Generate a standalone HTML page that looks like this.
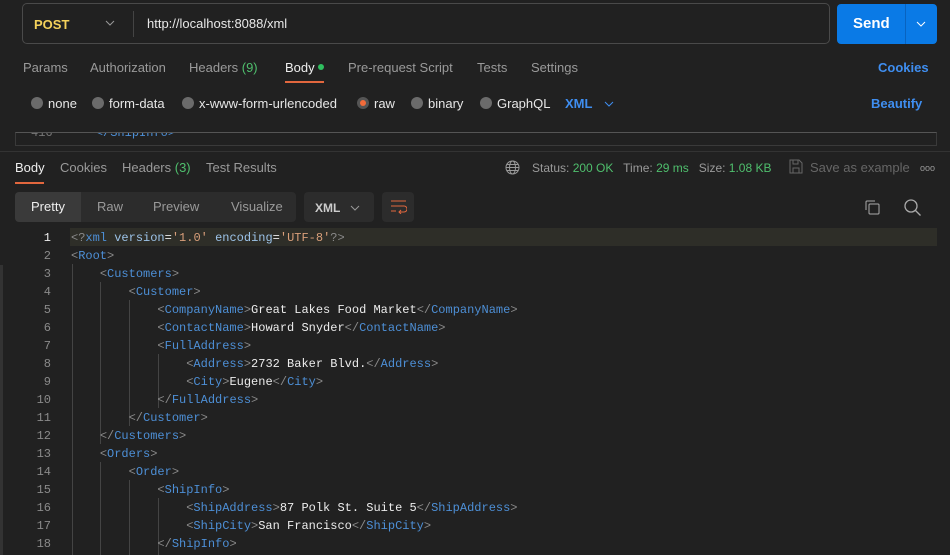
<!DOCTYPE html>
<html><head><meta charset="utf-8"><style>
*{box-sizing:border-box;margin:0;padding:0}
body{width:950px;height:555px;background:#212121;font-family:"Liberation Sans",sans-serif;color:#b0b0b0;font-size:13px;position:relative;overflow:hidden}
.a{position:absolute;white-space:nowrap}
.url{left:22px;top:3px;width:808px;height:41px;border:1px solid #4a4a4a;border-radius:5px}
.send{left:837px;top:4px;width:100px;height:40px;background:#0a7ae6;border-radius:4px}
.tab{top:60px;font-size:13px;color:#9a9a9a}
.g{color:#4fbf6d}
.rad{top:97px;width:12px;height:12px;border-radius:50%;background:#6b6b6b}
.rl{top:96px;color:#e6e6e6;font-size:13px}
.blue{color:#3f8ef0;font-weight:bold}
.code{font-family:"Liberation Mono",monospace;font-size:12px}
.ln{left:0;width:51px;text-align:right;color:#8a8a8a}
.t{color:#4d8fd6}.p{color:#8a8a8a}.w{color:#ececec}.at{color:#9cc3e8}.s{color:#d99f7a}
.guide{position:absolute;width:1px;background:#444}
pre.a{white-space:pre}
</style></head><body>
<div class="a url"></div>
<div class="a" style="left:34px;top:17px;color:#f5d25b;font-weight:bold;font-size:13px">POST</div>
<svg class="a" style="left:105px;top:20px" width="10" height="6"><path d="M1 1l4 4 4-4" stroke="#999" fill="none"/></svg>
<div class="a" style="left:133px;top:11px;width:1px;height:26px;background:#444"></div>
<div class="a" style="left:147px;top:16px;color:#e8e8e8;font-size:13px">http://localhost:8088/xml</div>
<div class="a send"></div>
<div class="a" style="left:853px;top:15px;color:#fff;font-weight:bold;font-size:15px">Send</div>
<div class="a" style="left:905px;top:4px;width:1px;height:40px;background:#0863c0"></div>
<svg class="a" style="left:916px;top:21px" width="10" height="6"><path d="M1 1l4 4 4-4" stroke="#fff" fill="none"/></svg>

<div class="a tab" style="left:23px">Params</div>
<div class="a tab" style="left:90px">Authorization</div>
<div class="a tab" style="left:189px">Headers <span class="g">(9)</span></div>
<div class="a tab" style="left:285px;color:#eee">Body <span style="display:inline-block;width:6px;height:6px;border-radius:50%;background:#2fbf5f;vertical-align:2px"></span></div>
<div class="a" style="left:285px;top:81px;width:39px;height:2px;background:#e2673e"></div>
<div class="a tab" style="left:348px">Pre-request Script</div>
<div class="a tab" style="left:477px">Tests</div>
<div class="a tab" style="left:531px">Settings</div>
<div class="a tab blue" style="left:878px">Cookies</div>

<div class="a rad" style="left:31px"></div><div class="a rl" style="left:48px">none</div>
<div class="a rad" style="left:92px"></div><div class="a rl" style="left:109px">form-data</div>
<div class="a rad" style="left:182px"></div><div class="a rl" style="left:199px">x-www-form-urlencoded</div>
<div class="a rad" style="left:357px;background:#555"><div style="margin:3px;width:6px;height:6px;border-radius:50%;background:#f26b3a"></div></div><div class="a rl" style="left:374px">raw</div>
<div class="a rad" style="left:411px"></div><div class="a rl" style="left:428px">binary</div>
<div class="a rad" style="left:480px"></div><div class="a rl" style="left:497px">GraphQL</div>
<div class="a blue" style="left:565px;top:96px">XML</div>
<svg class="a" style="left:604px;top:101px" width="10" height="6"><path d="M1 1l4 4 4-4" stroke="#3f8ef0" fill="none"/></svg>
<div class="a blue" style="left:871px;top:96px">Beautify</div>

<div class="a" style="left:15px;top:132px;width:922px;height:14px;border:1px solid #3a3a3a;border-top:1px solid #555;overflow:hidden">
<div class="code" style="position:absolute;left:15px;top:-7px;color:#777">416&nbsp;&nbsp;&nbsp;&nbsp;&nbsp;&nbsp;<span class="t">&lt;/ShipInfo&gt;</span></div></div>
<div class="a" style="left:0;top:151px;width:950px;height:1px;background:#333"></div>

<div class="a" style="left:15px;top:160px;color:#eee">Body</div>
<div class="a" style="left:15px;top:182px;width:29px;height:2px;background:#e2673e"></div>
<div class="a" style="left:60px;top:160px;color:#9a9a9a">Cookies</div>
<div class="a" style="left:122px;top:160px;color:#9a9a9a">Headers <span class="g">(3)</span></div>
<div class="a" style="left:206px;top:160px;color:#9a9a9a">Test Results</div>
<svg class="a" style="left:505px;top:160px" width="15" height="15" fill="none" stroke="#999"><circle cx="7.5" cy="7.5" r="6.5"/><ellipse cx="7.5" cy="7.5" rx="3" ry="6.5"/><path d="M1 7.5h13M2 4.5h11M2 10.5h11"/></svg>
<div class="a" style="left:532px;top:161px;font-size:12px;color:#9a9a9a">Status: <span class="g">200 OK</span>&nbsp;&nbsp; Time: <span class="g">29 ms</span>&nbsp;&nbsp; Size: <span class="g">1.08 KB</span></div>
<svg class="a" style="left:789px;top:159px" width="14" height="15" fill="none" stroke="#666"><path d="M1 1h9l3 3v10H1z M4 1v4h5V1 M4 14V9h6v5"/></svg>
<div class="a" style="left:810px;top:160px;color:#666">Save as example</div>
<div class="a" style="left:920px;top:163px;color:#999;font-size:9px">ooo</div>

<div class="a" style="left:15px;top:192px;width:281px;height:30px;background:#2c2c2c;border-radius:4px"></div>
<div class="a" style="left:15px;top:192px;width:66px;height:30px;background:#3a3a3a;border-radius:4px 0 0 4px"></div>
<div class="a" style="left:31px;top:199px;color:#eee">Pretty</div>
<div class="a" style="left:97px;top:199px;color:#9a9a9a">Raw</div>
<div class="a" style="left:153px;top:199px;color:#9a9a9a">Preview</div>
<div class="a" style="left:231px;top:199px;color:#9a9a9a">Visualize</div>
<div class="a" style="left:304px;top:192px;width:70px;height:30px;background:#2c2c2c;border-radius:4px"></div>
<div class="a" style="left:315px;top:201px;color:#ccc;font-size:12px;font-weight:bold">XML</div>
<svg class="a" style="left:350px;top:205px" width="10" height="6"><path d="M1 1l4 4 4-4" stroke="#999" fill="none"/></svg>
<div class="a" style="left:382px;top:192px;width:32px;height:30px;background:#2c2c2c;border-radius:4px"></div>
<svg class="a" style="left:390px;top:199px" width="17" height="15" fill="none" stroke="#e2673e"><path d="M1 2h15M1 7h13a3 3 0 0 1 0 6H9M11 11l-2 2 2 2M1 12h5"/></svg>
<svg class="a" style="left:865px;top:200px" width="15" height="15" fill="none" stroke="#aaa"><rect x="4" y="4" width="10" height="10" rx="1"/><path d="M1 10V2a1 1 0 0 1 1-1h8"/></svg>
<svg class="a" style="left:904px;top:199px" width="17" height="17" fill="none" stroke="#aaa" stroke-width="1.3"><circle cx="7" cy="7" r="6"/><path d="M11.5 11.5l5 5"/></svg>

<div class="a" style="left:0;top:265px;width:3px;height:290px;background:#333"></div>
<div class="a" style="left:70px;top:228px;width:867px;height:18px;background:#2e2e28"></div>
<div class="guide" style="left:72px;top:264px;height:291px"></div>
<div class="guide" style="left:100px;top:282px;height:162px"></div>
<div class="guide" style="left:129px;top:300px;height:126px"></div>
<div class="guide" style="left:158px;top:354px;height:54px"></div>
<div class="guide" style="left:100px;top:462px;height:93px"></div>
<div class="guide" style="left:129px;top:480px;height:75px"></div>
<div class="guide" style="left:158px;top:498px;height:57px"></div>

<div class="a code" style="left:0;top:229px;line-height:18px">
<div class="ln" style="color:#eee">1</div><div class="ln">2</div><div class="ln">3</div><div class="ln">4</div><div class="ln">5</div><div class="ln">6</div><div class="ln">7</div><div class="ln">8</div><div class="ln">9</div><div class="ln">10</div><div class="ln">11</div><div class="ln">12</div><div class="ln">13</div><div class="ln">14</div><div class="ln">15</div><div class="ln">16</div><div class="ln">17</div><div class="ln">18</div>
</div>
<pre class="a code" style="left:71px;top:229px;line-height:18px"><span class="p">&lt;?</span><span class="t">xml</span> <span class="at">version</span><span class="w">=</span><span class="s">'1.0'</span> <span class="at">encoding</span><span class="w">=</span><span class="s">'UTF-8'</span><span class="p">?&gt;</span>
<span class="p">&lt;</span><span class="t">Root</span><span class="p">&gt;</span>
    <span class="p">&lt;</span><span class="t">Customers</span><span class="p">&gt;</span>
        <span class="p">&lt;</span><span class="t">Customer</span><span class="p">&gt;</span>
            <span class="p">&lt;</span><span class="t">CompanyName</span><span class="p">&gt;</span><span class="w">Great Lakes Food Market</span><span class="p">&lt;/</span><span class="t">CompanyName</span><span class="p">&gt;</span>
            <span class="p">&lt;</span><span class="t">ContactName</span><span class="p">&gt;</span><span class="w">Howard Snyder</span><span class="p">&lt;/</span><span class="t">ContactName</span><span class="p">&gt;</span>
            <span class="p">&lt;</span><span class="t">FullAddress</span><span class="p">&gt;</span>
                <span class="p">&lt;</span><span class="t">Address</span><span class="p">&gt;</span><span class="w">2732 Baker Blvd.</span><span class="p">&lt;/</span><span class="t">Address</span><span class="p">&gt;</span>
                <span class="p">&lt;</span><span class="t">City</span><span class="p">&gt;</span><span class="w">Eugene</span><span class="p">&lt;/</span><span class="t">City</span><span class="p">&gt;</span>
            <span class="p">&lt;/</span><span class="t">FullAddress</span><span class="p">&gt;</span>
        <span class="p">&lt;/</span><span class="t">Customer</span><span class="p">&gt;</span>
    <span class="p">&lt;/</span><span class="t">Customers</span><span class="p">&gt;</span>
    <span class="p">&lt;</span><span class="t">Orders</span><span class="p">&gt;</span>
        <span class="p">&lt;</span><span class="t">Order</span><span class="p">&gt;</span>
            <span class="p">&lt;</span><span class="t">ShipInfo</span><span class="p">&gt;</span>
                <span class="p">&lt;</span><span class="t">ShipAddress</span><span class="p">&gt;</span><span class="w">87 Polk St. Suite 5</span><span class="p">&lt;/</span><span class="t">ShipAddress</span><span class="p">&gt;</span>
                <span class="p">&lt;</span><span class="t">ShipCity</span><span class="p">&gt;</span><span class="w">San Francisco</span><span class="p">&lt;/</span><span class="t">ShipCity</span><span class="p">&gt;</span>
            <span class="p">&lt;/</span><span class="t">ShipInfo</span><span class="p">&gt;</span></pre>
</body></html>
